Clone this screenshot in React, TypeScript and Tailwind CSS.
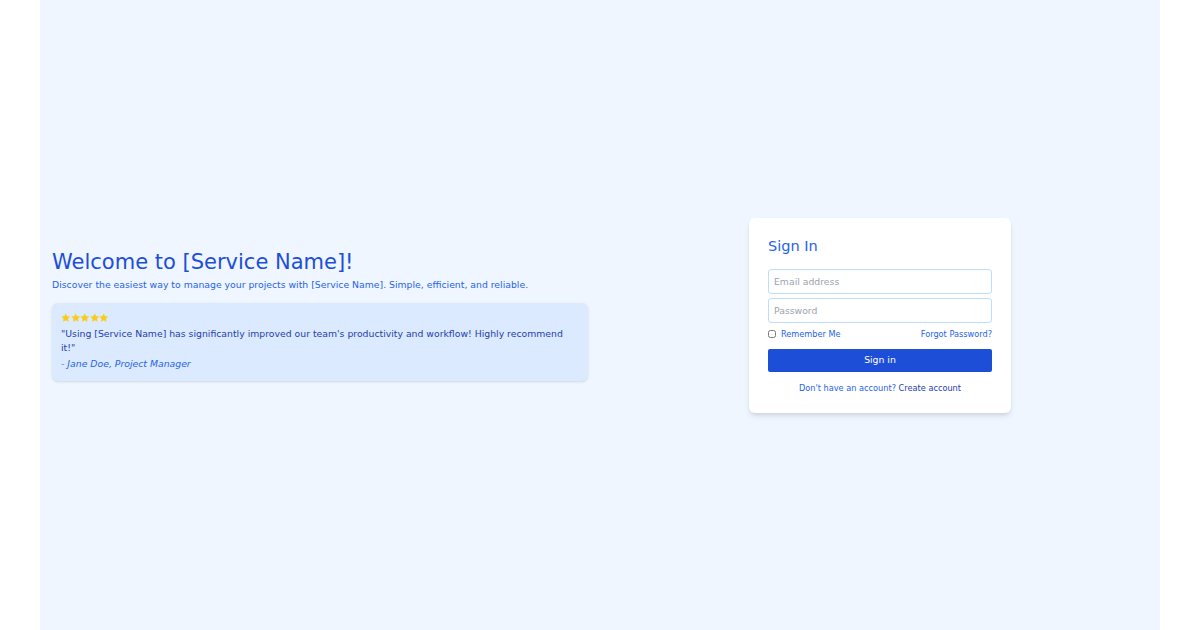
import React from "react"

function Star() {
  return (
    <svg viewBox="0 0 20 20" className="h-[9.5px] w-[9.5px] fill-[#facc15]">
      <path d="M10 0.8l2.9 5.8 6.4.9-4.6 4.5 1.1 6.4L10 15.4l-5.8 3 1.1-6.4L0.7 7.5l6.4-.9z" />
    </svg>
  )
}

export default function App() {
  return (
    <div className="min-h-screen bg-white" style={{ fontFamily: '"DejaVu Sans", "Noto Sans", sans-serif' }}>
      <div className="mx-auto flex min-h-screen max-w-[1120px] items-center bg-[#eff6ff] px-3">
        <div className="grid w-full grid-cols-2 items-center gap-6">
          {/* Left: intro + testimonial */}
          <div>
            <h1 className="text-[21px] leading-[26px] text-[#1d4ed8]">Welcome to [Service Name]!</h1>
            <p className="mt-[3px] text-[9.3px] leading-[14px] text-[#2563eb]">
              Discover the easiest way to manage your projects with [Service Name]. Simple, efficient, and reliable.
            </p>
            <div className="mt-[11px] rounded-md bg-[#dbeafe] px-[9px] pb-[10px] pt-[10px] shadow-sm">
              <div className="flex">
                <Star />
                <Star />
                <Star />
                <Star />
                <Star />
              </div>
              <p className="mt-[4px] text-[9.3px] leading-[14px] text-[#1e40af]">
                "Using [Service Name] has significantly improved our team's productivity and workflow! Highly recommend
                it!"
              </p>
              <p className="mt-[2px] text-[9.3px] italic leading-[14px] text-[#2563eb]">- Jane Doe, Project Manager</p>
            </div>
          </div>

          {/* Right: sign in card */}
          <div className="flex justify-center">
            <div className="w-[262px] rounded-md bg-white px-[19px] pb-[19px] pt-[17px] shadow-md">
              <h2 className="text-[14.5px] leading-[22px] text-[#2563eb]">Sign In</h2>
              <div className="mt-[12px] space-y-[4px]">
                <input
                  type="email"
                  placeholder="Email address"
                  className="block h-[25px] w-full rounded-[3px] border border-[#bfdbfe] px-[5px] text-[9.3px] placeholder:text-[#9ca3af]"
                />
                <input
                  type="password"
                  placeholder="Password"
                  className="block h-[25px] w-full rounded-[3px] border border-[#bfdbfe] px-[5px] text-[9.3px] placeholder:text-[#9ca3af]"
                />
              </div>
              <div className="mt-[5px] flex items-center justify-between text-[8.2px] leading-[12px]">
                <label className="flex items-center gap-[5px] text-[#2563eb]">
                  <input type="checkbox" className="h-[8px] w-[8px]" />
                  Remember Me
                </label>
                <a className="text-[#2563eb]">Forgot Password?</a>
              </div>
              <button className="mt-[9px] block h-[23px] w-full rounded-[2px] bg-[#1d4ed8] text-[9.3px] text-white">
                Sign in
              </button>
              <p className="mt-[10px] text-center text-[8.2px] leading-[12px] text-[#2563eb]">
                Don't have an account? <a className="text-[#1e40af]">Create account</a>
              </p>
            </div>
          </div>
        </div>
      </div>
    </div>
  )
}
